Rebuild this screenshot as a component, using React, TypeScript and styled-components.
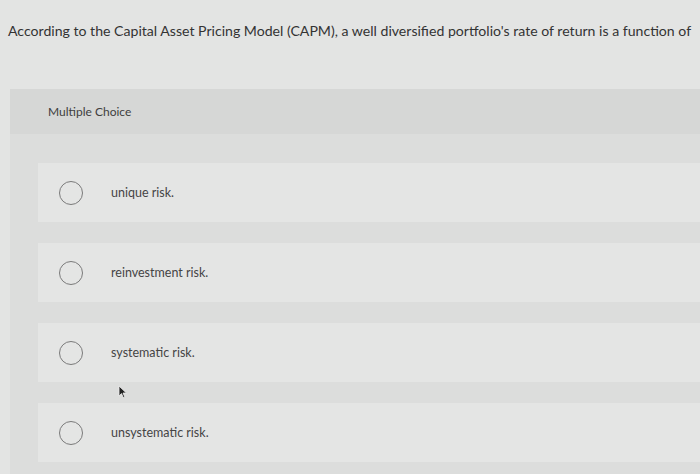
import React from "react";
import styled, { createGlobalStyle } from "styled-components";

const GlobalStyle = createGlobalStyle`
  html, body {
    margin: 0;
    padding: 0;
    background: #e3e4e3;
    overflow: hidden;
  }
  body {
    font-family: Lato, "Open Sans", sans-serif;
    color: #3b3b3b;
  }
`;

const OPTIONS = [
  "unique risk.",
  "reinvestment risk.",
  "systematic risk.",
  "unsystematic risk.",
];

const Page = styled.div`
  position: relative;
  width: 700px;
  height: 474px;
  overflow: hidden;
`;

const Question = styled.p`
  margin: 0;
  padding: 21px 0 0 8px;
  height: 89px;
  box-sizing: border-box;
  font-size: 14.1px;
  line-height: 20px;
  white-space: nowrap;
  color: #333;
`;

const Panel = styled.section`
  margin-left: 10px;
  width: 720px;
  background: #dcdddc;
  padding-bottom: 20px;
`;

const PanelHeader = styled.div`
  height: 45px;
  display: flex;
  align-items: center;
  padding-left: 38px;
  background: #d6d7d6;
  font-size: 12px;
  color: #3e3e3e;
`;

const OptionList = styled.ul`
  list-style: none;
  margin: 0;
  padding: 29px 0 0 28px;
  display: flex;
  flex-direction: column;
  gap: 21px;
`;

const OptionRow = styled.li`
  height: 59px;
  display: flex;
  align-items: center;
  gap: 28px;
  padding-left: 21px;
  background: #e4e5e4;
`;

const Radio = styled.span`
  width: 22px;
  height: 22px;
  border-radius: 50%;
  border: 1.5px solid #7a7a7a;
  flex-shrink: 0;
`;

const OptionText = styled.span`
  font-size: 12.5px;
  color: #444;
`;

const Cursor = styled.svg`
  position: absolute;
  left: 118px;
  top: 385px;
`;

const App = () => (
  <Page>
    <GlobalStyle />
    <Question>
      According to the Capital Asset Pricing Model (CAPM), a well diversified
      portfolio's rate of return is a function of
    </Question>
    <Panel>
      <PanelHeader>Multiple Choice</PanelHeader>
      <OptionList>
        {OPTIONS.map((option) => (
          <OptionRow key={option}>
            <Radio />
            <OptionText>{option}</OptionText>
          </OptionRow>
        ))}
      </OptionList>
    </Panel>
    <Cursor width="10" height="14" viewBox="0 0 10 14">
      <path d="M1 1 L1 11 L3.5 8.6 L5.3 12.6 L6.8 11.9 L5 8 L8.4 8 Z" fill="#222" stroke="#eee" strokeWidth="0.8" />
    </Cursor>
  </Page>
);

export default App;
